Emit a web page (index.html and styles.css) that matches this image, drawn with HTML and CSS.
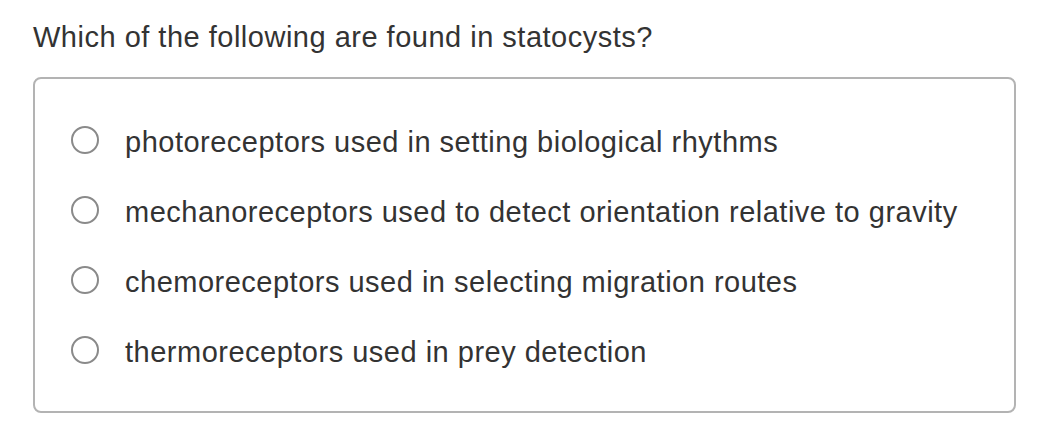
FILE: index.html
```html
<!DOCTYPE html>
<html>
<head>
<meta charset="utf-8">
<link rel="stylesheet" href="styles.css">
</head>
<body>
<div class="page">
  <div class="question">Which of the following are found in statocysts?</div>
  <div class="choices">
    <label class="choice"><span class="radio"></span><span class="text">photoreceptors used in setting biological rhythms</span></label>
    <label class="choice"><span class="radio"></span><span class="text">mechanoreceptors used to detect orientation relative to gravity</span></label>
    <label class="choice"><span class="radio"></span><span class="text">chemoreceptors used in selecting migration routes</span></label>
    <label class="choice"><span class="radio"></span><span class="text">thermoreceptors used in prey detection</span></label>
  </div>
</div>
</body>
</html>
```
FILE: styles.css
```css
html, body {
  margin: 0;
  padding: 0;
  background: #ffffff;
}
.page {
  padding: 17px 32px 0 33px;
  font-family: "Liberation Sans", Arial, sans-serif;
  color: #333333;
}
.question {
  font-size: 29px;
  letter-spacing: 0.5px;
  line-height: 40px;
}
.choices {
  margin-top: 20px;
  width: 983px;
  height: 336px;
  box-sizing: border-box;
  border: 2px solid #b3b3b3;
  border-radius: 8px;
  padding: 43px 0 0 36px;
  display: flex;
  flex-direction: column;
  gap: 30px;
}
.choice {
  display: flex;
  align-items: center;
  height: 40px;
  font-size: 29px;
  letter-spacing: 0.5px;
}
.radio {
  width: 24px;
  height: 24px;
  border: 2px solid #8a8a8a;
  border-radius: 50%;
  flex: none;
  margin-right: 26px;
  margin-top: -4px;
}
.text {
  line-height: 40px;
}
```
